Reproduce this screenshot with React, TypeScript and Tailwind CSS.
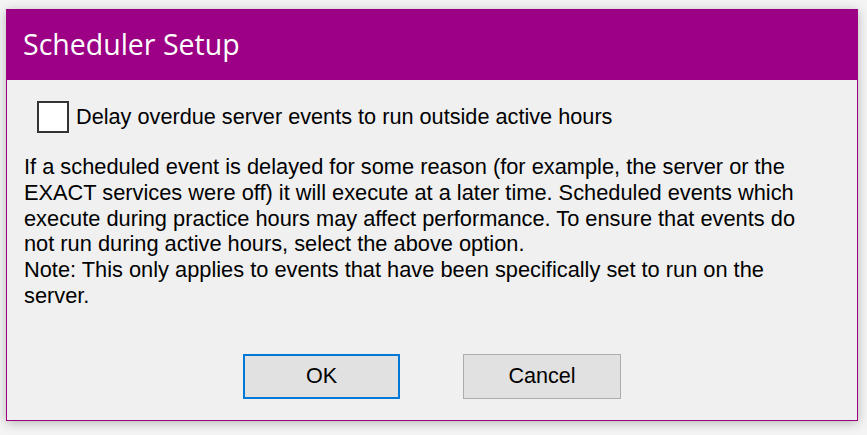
import React, { useState } from 'react';

function App() {
  const [delay, setDelay] = useState(false);

  return (
    <div className="w-[867px] h-[435px] bg-[#f4f4f4] pt-[9px] pl-[6px]" style={{ fontFamily: '"Liberation Sans", Arial, sans-serif' }}>
      <div className="w-[852px] h-[412px] flex flex-col border border-[#9c0084] bg-[#f0f0f0] shadow-[0_2px_10px_rgba(0,0,0,0.25)]">
        {/* Title bar */}
        <div className="h-[71px] shrink-0 bg-[#9c0084] flex items-center pl-[17px] -mx-px -mt-px">
          <span className="text-white text-[28.5px] leading-none" style={{ fontFamily: '"Open Sans", "Noto Sans", sans-serif' }}>
            Scheduler Setup
          </span>
        </div>

        <div className="flex-1 flex flex-col pl-[17px] pr-4">
          <label className="flex items-center mt-[21px] ml-[13px] gap-[7px] cursor-pointer">
            <input
              type="checkbox"
              checked={delay}
              onChange={(e) => setDelay(e.target.checked)}
              className="appearance-none w-[32px] h-[32px] border-2 border-[#333333] bg-white shrink-0 checked:bg-[#333]"
            />
            <span className="text-[21.7px] leading-none text-black">Delay overdue server events to run outside active hours</span>
          </label>

          <p className="mt-[21px] text-[21.8px] leading-[25.8px] text-black whitespace-nowrap">
            If a scheduled event is delayed for some reason (for example, the server or the
            <br />
            EXACT services were off) it will execute at a later time. Scheduled events which
            <br />
            execute during practice hours may affect performance. To ensure that events do
            <br />
            not run during active hours, select the above option.
            <br />
            Note: This only applies to events that have been specifically set to run on the
            <br />
            server.
          </p>

          <div className="mt-auto mb-[21px] flex justify-center gap-[63px] -ml-[17px] -mr-4">
            <button className="w-[157px] h-[45px] bg-[#e1e1e1] border-2 border-[#0078d7] text-[21.6px] text-black">
              OK
            </button>
            <button className="w-[158px] h-[45px] bg-[#e1e1e1] border border-[#adadad] text-[21.6px] text-black">
              Cancel
            </button>
          </div>
        </div>
      </div>
    </div>
  );
}

export default App;
